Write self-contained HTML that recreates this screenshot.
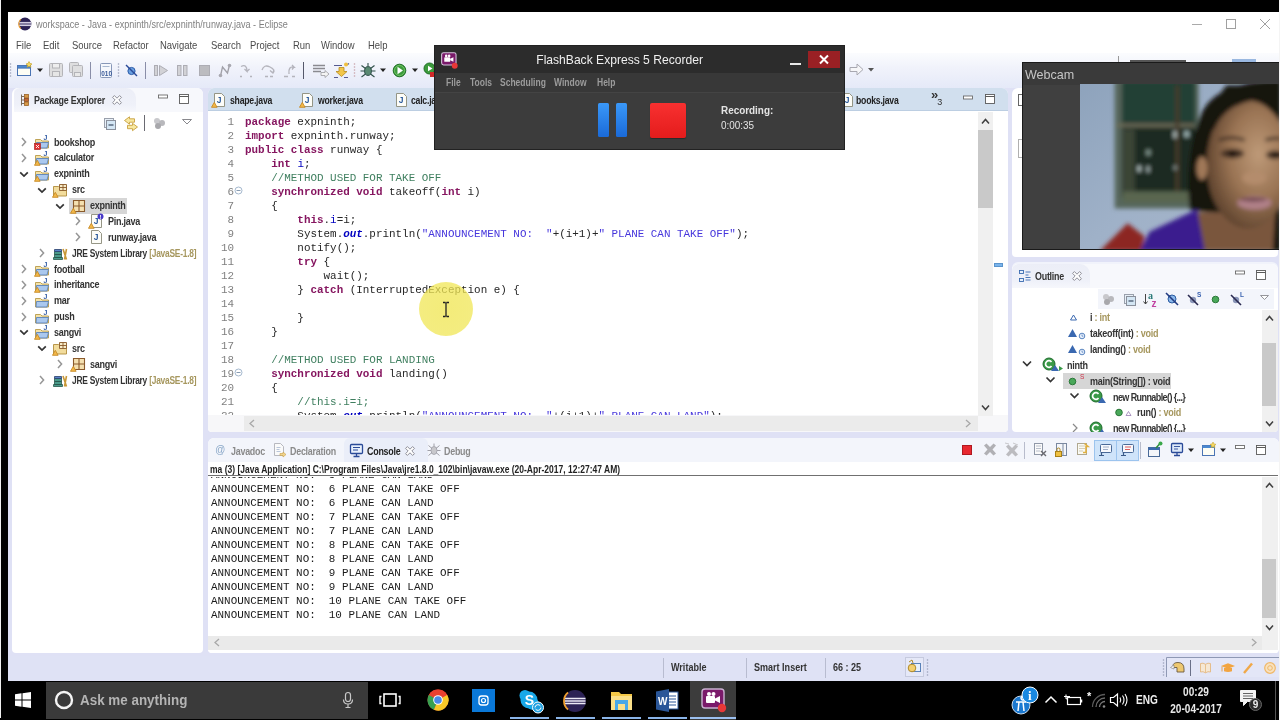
<!DOCTYPE html>
<html>
<head>
<meta charset="utf-8">
<title>Eclipse</title>
<style>
*{box-sizing:border-box;margin:0;padding:0}
html,body{width:1280px;height:720px;overflow:hidden;background:#000;font-family:"Liberation Sans",sans-serif;font-size:11px;color:#222}
.abs{position:absolute}
.sx{display:inline-block;transform:scaleX(.86);transform-origin:0 50%;white-space:nowrap}
#win{position:absolute;left:8px;top:12px;width:1271px;height:669px;background:#dfe1f5;overflow:hidden}
#title{position:absolute;left:0;top:0;width:1271px;height:23px;background:#fff}
#title .t{position:absolute;left:27.500px;top:5.500px;font-size:10.800px;color:#808080;transform:scaleX(.84);transform-origin:0 50%;white-space:nowrap}
#menubar{position:absolute;left:0;top:23px;width:1271px;height:18px;background:#fff}
#menubar span{position:absolute;top:4px;font-size:11px;color:#4a4a4a;transform:scaleX(.86);transform-origin:0 50%;white-space:nowrap}
#toolbar{position:absolute;left:0;top:41px;width:1271px;height:35px;background:linear-gradient(#fbfcfe,#f1f3fb 40%,#e5e9f8)}
.panel{position:absolute;background:#fff;border-radius:6px 6px 4px 4px;overflow:hidden}
.tabhdr{position:absolute;left:0;top:0;right:0;height:24px;background:#f3f5fc}
.tabtxt{position:absolute;font-size:11px;font-weight:bold;color:#333;letter-spacing:-0.3px;white-space:nowrap}
.tabtxt .sx{transform:scaleX(.81)}
.tree{position:absolute;font-size:10.5px;font-weight:bold;color:#333;letter-spacing:-0.3px;white-space:nowrap}
.mono{font-family:"Liberation Mono",monospace;font-size:10.92px;line-height:14px;white-space:pre}
.kw{color:#861660;font-weight:bold}
.cm{color:#3f7f5f}
.st{color:#4636dc}
.fld{color:#0000c0}
.fbm{top:30px;font-size:10.500px;font-weight:bold;color:#9c9c9c;white-space:nowrap;transform:scaleX(.81);transform-origin:0 50%}
#taskbar{position:absolute;left:8px;top:681px;width:1271px;height:39px;background:#000}
</style>
</head>
<body>
<div id="all" style="position:absolute;left:0;top:0;width:1280px;height:720px;filter:blur(.45px)">

<svg width="0" height="0" style="position:absolute">
<defs>
 <g id="i-proj"><path d="M1.500 5.500h5l1.500 1.500h6.500v7h-13z" fill="#f4e2a8" stroke="#b89a48" stroke-width=".9"/><path d="M2.500 8.500h12l-1.500 5.500h-11z" fill="#aac8ee" stroke="#5a82b8" stroke-width=".9"/><text x="9.500" y="6" font-size="7" font-weight="bold" font-family="Liberation Sans" fill="#3a62a8">J</text></g>
 <g id="i-warn"><path d="M3.300 10.300l2.800 5h-5.600z" fill="#f2b848" stroke="#c88c28" stroke-width=".9" stroke-linejoin="round"/></g>
 <g id="i-err"><rect x="0.500" y="9.500" width="6" height="6" fill="#e03030" stroke="#a01818" stroke-width=".6"/><path d="M2 11l3 3M5 11l-3 3" stroke="#fff" stroke-width=".9"/></g>
 <g id="i-src"><path d="M1.500 4.500h5l1.500 1.500h6.500v8h-13z" fill="#f2dc9c" stroke="#b08c3c" stroke-width=".9"/><path d="M7.500 2.500h7v6h-7zM7.500 5.500h7M11 2.500v6" fill="#f8ecc8" stroke="#8a5a28" stroke-width=".9"/></g>
 <g id="i-pkg"><path d="M3.500 2.500h11v11h-11zM3.500 8h11M9 2.500v11" fill="#f4e0b0" stroke="#8a5a2c" stroke-width="1.100"/></g>
 <g id="i-jfile"><path d="M3.500 1.500h7l3 3v10h-10z" fill="#fdfdf8" stroke="#8a8a78" stroke-width=".9"/><text x="5.800" y="11.200" font-size="8.500" font-weight="bold" font-family="Liberation Sans" fill="#2a5a9c">J</text></g>
 <g id="i-jre"><path d="M1.500 12.500h9v2h-9zM2.500 9.500h7v3h-7zM2.500 6.500h7v3h-7z" fill="#4a9a8a" stroke="#28584c" stroke-width=".8"/><path d="M2.500 4.500h7v2h-7z" fill="#5a82c8" stroke="#28406c" stroke-width=".8"/><path d="M11 4l3.500 10.500M14.500 4l-2 10.500" stroke="#c89838" stroke-width="1.600"/></g>
 <g id="i-pkgexp"><path d="M2.500 2.500v11M2.500 4.500h3M2.500 8h3M2.500 11.500h3" stroke="#7a6a58" stroke-width="1" fill="none"/><rect x="5.500" y="2.500" width="4" height="3.500" fill="#d89848" stroke="#9a6428" stroke-width=".8"/><rect x="5.500" y="6.500" width="4" height="3" fill="#c06830" stroke="#8a4820" stroke-width=".8"/><rect x="5.500" y="10" width="4" height="3.500" fill="#d89848" stroke="#9a6428" stroke-width=".8"/></g>
 <g id="a-r"><path d="M2 1l3.600 4-3.600 4" fill="none" stroke="#969696" stroke-width="1.500"/></g>
 <g id="a-d"><path d="M1.200 2.300l3.800 3.800 3.800-3.800" fill="none" stroke="#353535" stroke-width="1.700"/></g>
 <g id="i-min"><rect x="0.500" y="0.500" width="9" height="3" fill="#fff" stroke="#6a6a6a" stroke-width=".9"/></g>
 <g id="i-max"><rect x="0.500" y="0.500" width="9" height="9" fill="#fff" stroke="#5a5a5a" stroke-width=".9"/><path d="M0.500 2.500h9" stroke="#5a5a5a" stroke-width="1"/></g>
 <g id="i-x"><path d="M1.300 2.800L2.800 1.300 5 3.500 7.200 1.300 8.700 2.800 6.500 5 8.700 7.200 7.200 8.700 5 6.500 2.800 8.700 1.300 7.200 3.500 5z" fill="#fff" stroke="#85858e" stroke-width=".75"/></g>
</defs></svg>
<div id="win">
  <div id="title"><svg class="abs" style="left:9.500px;top:5px" width="14" height="14" viewBox="0 0 16 16"><circle cx="8" cy="8" r="7.3" fill="#2c2255"/><path d="M1 6.2h14M1 8h14M1 9.8h14" stroke="#e8e4f4" stroke-width="1.1"/><path d="M3.2 2.6A7.3 7.3 0 0 0 3.2 13.4" stroke="#f0a030" stroke-width="1.2" fill="none"/></svg><div class="t">workspace - Java - expninth/src/expninth/runway.java - Eclipse</div><svg class="abs" style="left:1180px;top:4px" width="84" height="16" viewBox="0 0 84 16"><path d="M4 8.5h10" stroke="#aaa" stroke-width="1"/><rect x="38.5" y="3.5" width="9" height="9" fill="none" stroke="#a0a0a0" stroke-width="1"/><path d="M72 3l10 10M82 3l-10 10" stroke="#a0a0a0" stroke-width="1"/></svg></div>
  <div id="menubar">
    <span style="left:8px">File</span><span style="left:35px">Edit</span><span style="left:64px">Source</span><span style="left:105px">Refactor</span><span style="left:152px">Navigate</span><span style="left:203px">Search</span><span style="left:242px">Project</span><span style="left:285px">Run</span><span style="left:313px">Window</span><span style="left:360px">Help</span>
  </div>
  <div id="toolbar">
<svg class="abs" style="left:0;top:3.500px" width="440" height="32" viewBox="8 56 440 32">
 <g fill="#9aa0b8"><circle cx="10.5" cy="63" r=".8"/><circle cx="10.5" cy="66" r=".8"/><circle cx="10.5" cy="69" r=".8"/><circle cx="10.5" cy="72" r=".8"/><circle cx="10.5" cy="75" r=".8"/></g>
 <!-- new -->
 <rect x="17.5" y="64.5" width="13" height="10" fill="#fdfdf4" stroke="#4a74b4"/><rect x="17.5" y="64.5" width="13" height="2.6" fill="#4a88d0" stroke="#4a74b4"/><path d="M29 60.5l1 2 2 .4-1.5 1.4.4 2-1.9-1-1.9 1 .4-2L26 62.900l2-.4z" fill="#f6d860" stroke="#c09a20" stroke-width=".6"/>
 <path d="M37 67.500h6l-3 3.500z" fill="#222"/>
 <!-- save -->
 <g fill="#dededf" stroke="#b4b4b8"><rect x="49.500" y="62.500" width="13" height="13" rx="1"/><rect x="52.500" y="62.500" width="7" height="4.500" fill="#eee"/><rect x="52.500" y="70.500" width="7" height="5" fill="#e6e6e6"/></g>
 <g fill="#dededf" stroke="#b4b4b8"><rect x="69.500" y="61.500" width="9" height="10" rx="1"/><rect x="72.500" y="64.500" width="10" height="11" rx="1"/><rect x="74.500" y="71.500" width="6" height="4" fill="#e8e8e8"/></g>
 <path d="M90.500 61v17" stroke="#8a8ea8"/>
 <!-- 010 -->
 <rect x="100.500" y="62.500" width="11" height="14" rx="1" fill="#f6f8fc" stroke="#8898b8"/><text x="101.200" y="74.800" font-size="6.500" font-family="Liberation Sans" font-weight="bold" fill="#3a5a9a">010</text><path d="M102.500 65.500h7" stroke="#a8b8d0"/>
 <g fill="#9aa0b8"><circle cx="118.500" cy="63" r=".8"/><circle cx="118.500" cy="66" r=".8"/><circle cx="118.500" cy="69" r=".8"/><circle cx="118.500" cy="72" r=".8"/><circle cx="118.500" cy="75" r=".8"/></g>
 <!-- skip breakpoints -->
 <circle cx="131.500" cy="70" r="3.600" fill="#6aa0e0" stroke="#2a5aa8"/><path d="M126 64l11 11" stroke="#2a4a98" stroke-width="1.400"/>
 <path d="M145.500 61v17" stroke="#8a8ea8"/>
 <!-- resume/suspend/stop gray -->
 <g fill="#d2d2d6" stroke="#adadb4"><rect x="154.500" y="64.500" width="3" height="10"/><path d="M159.500 64.500l8 5-8 5z"/><rect x="177.500" y="64.500" width="3.500" height="10"/><rect x="183.500" y="64.500" width="3.500" height="10"/><rect x="199.500" y="64.500" width="10" height="10" fill="#bcbcc0"/></g>
 <!-- disconnect -->
 <path d="M220.500 75l2-9 5 6 2-8" stroke="#a0a0a8" stroke-width="1.300" fill="none"/><circle cx="220.500" cy="74.500" r="1.800" fill="#a8a8b0"/><circle cx="229.500" cy="64.500" r="1.800" fill="#a8a8b0"/>
 <!-- step into/over/return -->
 <g stroke="#b4b4bc" fill="none" stroke-width="1.300"><path d="M241 65.500q6-3 6 5l-2.500-2.500M247 70.500l2.500-2.500"/><path d="M240 75.500h3M250 75.500h3" stroke-dasharray="2 1"/>
 <path d="M262 69q2-6 8-3t3 6l-3-2.500M273 72l1-3.500"/><path d="M265 75.500h3M270 75.500h3"/>
 <path d="M284 75.500h4M292 75.500h3"/><path d="M289 73q-1-8 5-7l-2-2M294 66l-2 2.500"/></g>
 <path d="M303.500 61v17" stroke="#55586a"/>
 <!-- drop to frame -->
 <path d="M313 64.500h12M313 67.500h12M313 70.500h8" stroke="#8a8a90" stroke-width="1.300"/><path d="M321 71.500h4v-2l4 3.500-4 3.500v-2h-4z" fill="#f4f4f4" stroke="#9a9aa0" stroke-width=".8"/>
 <!-- step filters -->
 <path d="M334 64.500h8M346 64.500l3-2M334 76.500h4M344 76.500h4" stroke="#555a90" stroke-width="1.200"/><path d="M339 66.500h5v4h3l-5.500 5-5.500-5h3z" fill="#f2c64a" stroke="#b88c1c" stroke-width=".8"/><circle cx="346" cy="63.500" r="2" fill="#f0c040"/>
 <g fill="#c8a0a8"><circle cx="354.500" cy="63" r=".8"/><circle cx="354.500" cy="66" r=".8"/><circle cx="354.500" cy="69" r=".8"/><circle cx="354.500" cy="72" r=".8"/><circle cx="354.500" cy="75" r=".8"/></g>
 <!-- debug -->
 <ellipse cx="368" cy="70" rx="3.400" ry="4.400" fill="#5a8a72" stroke="#2f4f48"/><path d="M361.500 64.500l4 3M374.500 64.500l-4 3M360.500 70h4M375.500 70h-4M361.500 76l4-3M374.500 76l-4-3M368 62v3" stroke="#2f4f48" stroke-width="1.100"/>
 <path d="M380 67.500h6l-3 3.500z" fill="#222"/>
 <!-- run -->
 <circle cx="399.500" cy="69.500" r="6.300" fill="#3c9a3c" stroke="#1e6e24"/><circle cx="399.500" cy="69.500" r="5" fill="none" stroke="#7ccc6c" stroke-width=".8"/><path d="M397.500 65.800l5.500 3.700-5.500 3.700z" fill="#fff"/>
 <path d="M412 67.500h6l-3 3.500z" fill="#222"/>
 <circle cx="429.500" cy="67.500" r="5.500" fill="#3c9a3c" stroke="#1e6e24"/><path d="M428 64.800l4.500 2.700-4.500 2.700z" fill="#fff"/><rect x="430" y="71" width="5" height="5" fill="#d02828"/>
</svg>
<svg class="abs" style="left:838px;top:6px" width="40" height="20" viewBox="0 0 40 20"><path d="M4 8.500h7v-3.500l6 5.500-6 5.500v-3.500h-7z" fill="#f6f6f8" stroke="#a8a8b0"/><path d="M22 9h6l-3 3.500z" fill="#555"/></svg>
</div>

  <!-- Package Explorer -->
  <div class="panel" id="pkg" style="left:4px;top:76px;width:191px;height:565px;padding:0"><div class="abs" style="left:2px;top:0;width:189px;height:565px">
<div class="tabhdr" style="background:#f7f8fc"></div><div class="abs" style="left:0;top:0;width:122px;height:24px;border-radius:6px 10px 0 0;background:linear-gradient(#eceef7,#eff1f9 70%,#f6f7fc)"></div>
<svg class="abs" style="left:5px;top:4px" width="16" height="16" viewBox="0 0 16 16"><use href="#i-pkgexp"/></svg>
<div class="tabtxt" style="left:20px;top:6px"><span class="sx">Package Explorer</span></div>
<svg class="abs" style="left:97px;top:6px" width="12" height="12" viewBox="0 0 10 10"><use href="#i-x"/></svg>
<svg class="abs" style="left:144px;top:6px" width="10" height="5" viewBox="0 0 10 4"><use href="#i-min"/></svg>
<svg class="abs" style="left:165px;top:6px" width="10" height="10" viewBox="0 0 10 10"><use href="#i-max"/></svg>
<svg class="abs" style="left:86px;top:26px" width="100" height="18" viewBox="100 114 100 18">
<rect x="104.500" y="118.500" width="9" height="9" fill="#e8f0f8" stroke="#9aa0ac"/><rect x="106.500" y="120.500" width="9" height="9" fill="#d4e6f4" stroke="#8a909c"/><path d="M108.500 125h5" stroke="#5a6a80" stroke-width="1.400"/>
<path d="M134.500 118.800h-5v-2l-5 3.700 5 3.700v-2h5z" fill="#f8e8a0" stroke="#c8a040" stroke-width=".9" stroke-linejoin="round"/><path d="M127.500 125.300h5v-2l5 3.700-5 3.700v-2h-5z" fill="#f8e8a0" stroke="#c8a040" stroke-width=".9" stroke-linejoin="round"/>
<path d="M144.500 115v16" stroke="#6a6a72"/>
<circle cx="157" cy="121" r="3" fill="#c8c8cc"/><circle cx="162" cy="123" r="3" fill="#b8b8bc"/><circle cx="158" cy="126" r="3" fill="#a8a8ac"/>
<path d="M182.500 119.500h9l-4.500 4.500z" fill="#fff" stroke="#7a7a80" stroke-width=".9"/>
</svg>
<svg class="abs" style="left:6px;top:49.0px" width="8" height="10" viewBox="0 0 8 10"><use href="#a-r"/></svg>
<svg class="abs" style="left:20px;top:46.0px" width="16" height="16" viewBox="0 0 16 16"><use href="#i-proj"/><use href="#i-err"/></svg>
<div class="tree" style="left:40px;top:47.5px"><span class="sx">bookshop</span></div>
<svg class="abs" style="left:6px;top:64.9px" width="8" height="10" viewBox="0 0 8 10"><use href="#a-r"/></svg>
<svg class="abs" style="left:20px;top:61.9px" width="16" height="16" viewBox="0 0 16 16"><use href="#i-proj"/><use href="#i-warn"/></svg>
<div class="tree" style="left:40px;top:63.4px"><span class="sx">calculator</span></div>
<svg class="abs" style="left:5px;top:81.7px" width="10" height="9" viewBox="0 0 10 9"><use href="#a-d"/></svg>
<svg class="abs" style="left:20px;top:77.7px" width="16" height="16" viewBox="0 0 16 16"><use href="#i-proj"/><use href="#i-warn"/></svg>
<div class="tree" style="left:40px;top:79.2px"><span class="sx">expninth</span></div>
<svg class="abs" style="left:23px;top:97.6px" width="10" height="9" viewBox="0 0 10 9"><use href="#a-d"/></svg>
<svg class="abs" style="left:38px;top:93.6px" width="16" height="16" viewBox="0 0 16 16"><use href="#i-src"/><use href="#i-warn"/></svg>
<div class="tree" style="left:58px;top:95.1px"><span class="sx">src</span></div>
<div class="abs" style="left:55px;top:109.5px;width:58px;height:16px;background:#d6d6d6"></div>
<svg class="abs" style="left:41px;top:113.5px" width="10" height="9" viewBox="0 0 10 9"><use href="#a-d"/></svg>
<svg class="abs" style="left:56px;top:109.5px" width="16" height="16" viewBox="0 0 16 16"><use href="#i-pkg"/><use href="#i-warn"/></svg>
<div class="tree" style="left:76px;top:111.0px"><span class="sx">expninth</span></div>
<svg class="abs" style="left:60px;top:128.3px" width="8" height="10" viewBox="0 0 8 10"><use href="#a-r"/></svg>
<svg class="abs" style="left:74px;top:125.3px" width="16" height="16" viewBox="0 0 16 16"><use href="#i-jfile"/><use href="#i-warn"/><circle cx="12.500" cy="3.500" r="3" fill="#4838c8"/><text x="11.600" y="5.800" font-size="6" font-weight="bold" fill="#fff" font-family="Liberation Sans">!</text></svg>
<div class="tree" style="left:94px;top:126.8px"><span class="sx">Pin.java</span></div>
<svg class="abs" style="left:60px;top:144.2px" width="8" height="10" viewBox="0 0 8 10"><use href="#a-r"/></svg>
<svg class="abs" style="left:74px;top:141.2px" width="16" height="16" viewBox="0 0 16 16"><use href="#i-jfile"/></svg>
<div class="tree" style="left:94px;top:142.7px"><span class="sx">runway.java</span></div>
<svg class="abs" style="left:24px;top:160.1px" width="8" height="10" viewBox="0 0 8 10"><use href="#a-r"/></svg>
<svg class="abs" style="left:38px;top:157.1px" width="16" height="16" viewBox="0 0 16 16"><use href="#i-jre"/></svg>
<div class="tree" style="left:58px;top:158.6px"><span class="sx" style="transform:scaleX(.8)">JRE System Library<span style="color:#a6975e"> [JavaSE-1.8]</span></span></div>
<svg class="abs" style="left:6px;top:176.0px" width="8" height="10" viewBox="0 0 8 10"><use href="#a-r"/></svg>
<svg class="abs" style="left:20px;top:173.0px" width="16" height="16" viewBox="0 0 16 16"><use href="#i-proj"/><use href="#i-warn"/></svg>
<div class="tree" style="left:40px;top:174.5px"><span class="sx">football</span></div>
<svg class="abs" style="left:6px;top:191.8px" width="8" height="10" viewBox="0 0 8 10"><use href="#a-r"/></svg>
<svg class="abs" style="left:20px;top:188.8px" width="16" height="16" viewBox="0 0 16 16"><use href="#i-proj"/><use href="#i-warn"/></svg>
<div class="tree" style="left:40px;top:190.3px"><span class="sx">inheritance</span></div>
<svg class="abs" style="left:6px;top:207.7px" width="8" height="10" viewBox="0 0 8 10"><use href="#a-r"/></svg>
<svg class="abs" style="left:20px;top:204.7px" width="16" height="16" viewBox="0 0 16 16"><use href="#i-proj"/></svg>
<div class="tree" style="left:40px;top:206.2px"><span class="sx">mar</span></div>
<svg class="abs" style="left:6px;top:223.6px" width="8" height="10" viewBox="0 0 8 10"><use href="#a-r"/></svg>
<svg class="abs" style="left:20px;top:220.6px" width="16" height="16" viewBox="0 0 16 16"><use href="#i-proj"/></svg>
<div class="tree" style="left:40px;top:222.1px"><span class="sx">push</span></div>
<svg class="abs" style="left:5px;top:240.4px" width="10" height="9" viewBox="0 0 10 9"><use href="#a-d"/></svg>
<svg class="abs" style="left:20px;top:236.4px" width="16" height="16" viewBox="0 0 16 16"><use href="#i-proj"/><use href="#i-warn"/></svg>
<div class="tree" style="left:40px;top:237.9px"><span class="sx">sangvi</span></div>
<svg class="abs" style="left:23px;top:256.3px" width="10" height="9" viewBox="0 0 10 9"><use href="#a-d"/></svg>
<svg class="abs" style="left:38px;top:252.3px" width="16" height="16" viewBox="0 0 16 16"><use href="#i-src"/><use href="#i-warn"/></svg>
<div class="tree" style="left:58px;top:253.8px"><span class="sx">src</span></div>
<svg class="abs" style="left:42px;top:271.2px" width="8" height="10" viewBox="0 0 8 10"><use href="#a-r"/></svg>
<svg class="abs" style="left:56px;top:268.2px" width="16" height="16" viewBox="0 0 16 16"><use href="#i-pkg"/><use href="#i-warn"/></svg>
<div class="tree" style="left:76px;top:269.7px"><span class="sx">sangvi</span></div>
<svg class="abs" style="left:24px;top:287.0px" width="8" height="10" viewBox="0 0 8 10"><use href="#a-r"/></svg>
<svg class="abs" style="left:38px;top:284.0px" width="16" height="16" viewBox="0 0 16 16"><use href="#i-jre"/></svg>
<div class="tree" style="left:58px;top:285.5px"><span class="sx" style="transform:scaleX(.8)">JRE System Library<span style="color:#a6975e"> [JavaSE-1.8]</span></span></div>
  </div></div>
  <!-- Editor -->
  <div class="panel" id="editor" style="left:200px;top:76px;width:800px;height:344px">
<div class="tabhdr" style="background:#d1dfee;height:23px;border-bottom:1px solid #bccee2"></div>
<svg class="abs" style="left:3px;top:4px" width="16" height="16" viewBox="0 0 16 16"><use href="#i-jfile"/><use href="#i-warn"/></svg>
<div class="tabtxt" style="left:22px;top:6px;color:#222"><span class="sx" style="transform:scaleX(.79)">shape.java</span></div>
<svg class="abs" style="left:91px;top:4px" width="16" height="16" viewBox="0 0 16 16"><use href="#i-jfile"/><use href="#i-warn"/></svg>
<div class="tabtxt" style="left:110px;top:6px;color:#222"><span class="sx" style="transform:scaleX(.79)">worker.java</span></div>
<svg class="abs" style="left:185px;top:4px" width="16" height="16" viewBox="0 0 16 16"><use href="#i-jfile"/></svg>
<div class="tabtxt" style="left:203px;top:6px;color:#222"><span class="sx" style="transform:scaleX(.79)">calc.java</span></div>
<svg class="abs" style="left:631px;top:4px" width="16" height="16" viewBox="0 0 16 16"><use href="#i-jfile"/></svg>
<div class="tabtxt" style="left:648px;top:6px;color:#222"><span class="sx" style="transform:scaleX(.79)">books.java</span></div>
<div class="abs" style="left:723px;top:0px;font-size:13px;line-height:13px;font-weight:bold;color:#333">»<span style="font-size:9px;position:relative;top:6px;left:-1px;font-weight:normal">3</span></div>
<svg class="abs" style="left:755px;top:7px" width="10" height="5" viewBox="0 0 10 4"><use href="#i-min"/></svg>
<svg class="abs" style="left:777px;top:6px" width="10" height="10" viewBox="0 0 10 10"><use href="#i-max"/></svg>
<div class="abs mono" style="left:0;top:26.500px;width:26px;text-align:right;color:#808080">1
2
3
4
5
6
7
8
9
10
11
12
13
14
15
16
17
18
19
20
21
22</div>
<div class="abs mono" style="left:37px;top:26.500px;color:#262626"><span class="kw">package</span> expninth;
<span class="kw">import</span> expninth.runway;
<span class="kw">public</span> <span class="kw">class</span> runway {
    <span class="kw">int</span> <span class="fld">i</span>;
    <span class="cm">//METHOD USED FOR TAKE OFF</span>
    <span class="kw">synchronized</span> <span class="kw">void</span> takeoff(<span class="kw">int</span> i)
    {
        <span class="kw">this</span>.<span class="fld">i</span>=i;
        System.<span class="fld" style="font-style:italic;font-weight:bold">out</span>.println(<span class="st">"ANNOUNCEMENT NO:  "</span>+(i+1)+<span class="st">" PLANE CAN TAKE OFF"</span>);
        notify();
        <span class="kw">try</span> {
            wait();
        } <span class="kw">catch</span> (InterruptedException e) {

        }
    }

    <span class="cm">//METHOD USED FOR LANDING</span>
    <span class="kw">synchronized</span> <span class="kw">void</span> landing()
    {
        <span class="cm">//this.i=i;</span>
        System.<span class="fld" style="font-style:italic;font-weight:bold">out</span>.println(<span class="st">"ANNOUNCEMENT NO:  "</span>+(i+1)+<span class="st">" PLANE CAN LAND"</span>);</div>
<svg class="abs" style="left:26px;top:98px" width="9" height="9" viewBox="0 0 9 9"><circle cx="4.500" cy="4.500" r="3.500" fill="#fff" stroke="#9ab0c8" stroke-width=".9"/><path d="M2.500 4.500h4" stroke="#7a90a8" stroke-width=".9"/></svg>
<svg class="abs" style="left:26px;top:280px" width="9" height="9" viewBox="0 0 9 9"><circle cx="4.500" cy="4.500" r="3.500" fill="#fff" stroke="#9ab0c8" stroke-width=".9"/><path d="M2.500 4.500h4" stroke="#7a90a8" stroke-width=".9"/></svg>
<div class="abs" style="left:212px;top:195px;width:54px;height:54px;margin:-1px;border-radius:50%;background:radial-gradient(circle,rgba(240,230,84,.78) 0,rgba(240,230,84,.74) 72%,rgba(242,234,110,.5) 88%,rgba(244,238,140,0) 100%)"></div>
<svg class="abs" style="left:233px;top:213px" width="10" height="17" viewBox="0 0 10 17"><path d="M2 1.500h2.500M5.500 1.500H8M2 15.500h2.500M5.500 15.500H8M5 1.500v14" stroke="#222" stroke-width="1.300" fill="none"/></svg>
<div class="abs" style="left:0;top:327px;width:800px;height:17px;background:#f7f7f9"></div>
<div class="abs" style="left:36px;top:328px;width:734px;height:15px;background:#ebebeb"></div>
<svg class="abs" style="left:40px;top:331px" width="8" height="9" viewBox="0 0 8 9"><path d="M6 1l-4 3.500 4 3.500" fill="none" stroke="#a8a8a8" stroke-width="1.300"/></svg>
<svg class="abs" style="left:756px;top:331px" width="8" height="9" viewBox="0 0 8 9"><path d="M2 1l4 3.500-4 3.500" fill="none" stroke="#a8a8a8" stroke-width="1.300"/></svg>
<div class="abs" style="left:770px;top:24px;width:15px;height:304px;background:#f0f0f0"></div>
<div class="abs" style="left:770px;top:42px;width:15px;height:78px;background:#c9c9c9"></div>
<svg class="abs" style="left:773px;top:30px" width="9" height="7" viewBox="0 0 9 7"><path d="M1 5.500l3.500-4 3.500 4" fill="none" stroke="#404040" stroke-width="1.500"/></svg>
<svg class="abs" style="left:773px;top:316px" width="9" height="7" viewBox="0 0 9 7"><path d="M1 1.500l3.500 4 3.500-4" fill="none" stroke="#404040" stroke-width="1.500"/></svg>
<div class="abs" style="left:786px;top:175px;width:9px;height:4px;background:#7ab4ec;border:1px solid #5a94cc"></div>
  </div>
  <!-- Right top -->
  <div class="panel" id="rtop" style="left:1004px;top:76px;width:266px;height:169px"><div class="abs" style="left:6px;top:51px;width:8px;height:19px;border:1px solid #b0b0b0;background:#fff"></div><div class="abs" style="left:6px;top:6px;width:5px;height:12px;border:1px solid #666"></div></div>
  <!-- Outline -->
  <div class="panel" id="outline" style="left:1004px;top:252px;width:266px;height:168px;box-shadow:0 -2px 0 #f1f3fb">
<div class="tabhdr" style="background:#f7f8fc"></div><div class="abs" style="left:0;top:0;width:78px;height:24px;border-radius:6px 10px 0 0;background:linear-gradient(#eceef7,#eff1f9 70%,#f6f7fc)"></div>
<svg class="abs" style="left:6px;top:4px" width="14" height="16" viewBox="0 0 14 16"><rect x="1.500" y="2.500" width="4" height="3" fill="#e8f0fc" stroke="#3a6ab0" stroke-width=".9"/><rect x="1.500" y="10.500" width="4" height="3" fill="#e8f0fc" stroke="#3a6ab0" stroke-width=".9"/><path d="M7.500 4h5M7.500 7h3M7.500 9.500h5M7.500 12h5" stroke="#3a6ab0" stroke-width=".9"/></svg>
<div class="tabtxt" style="left:23px;top:6px"><span class="sx">Outline</span></div>
<svg class="abs" style="left:59px;top:6px" width="12" height="12" viewBox="0 0 10 10"><use href="#i-x"/></svg>
<svg class="abs" style="left:223px;top:6px" width="10" height="5" viewBox="0 0 10 4"><use href="#i-min"/></svg>
<svg class="abs" style="left:244px;top:6px" width="10" height="10" viewBox="0 0 10 10"><use href="#i-max"/></svg>
<svg class="abs" style="left:86px;top:25px" width="176" height="20" viewBox="1098 289 176 20">
<rect x="1098" y="289" width="176" height="20" fill="#f3f5fb"/>
<circle cx="1106" cy="297" r="3" fill="#c8c8cc"/><circle cx="1111" cy="299" r="3" fill="#b8b8bc"/><circle cx="1107" cy="302" r="3" fill="#a8a8ac"/>
<rect x="1124.500" y="294.500" width="9" height="9" fill="#e8f0f8" stroke="#9aa0ac"/><rect x="1126.500" y="296.500" width="9" height="9" fill="#d4e6f4" stroke="#8a909c"/><path d="M1128.500 301h5" stroke="#5a6a80" stroke-width="1.400"/>
<path d="M1145.500 294v10l-2-2.500M1145.500 304l2-2.500" stroke="#444" fill="none"/><text x="1148" y="299" font-size="10" font-weight="bold" font-family="Liberation Serif" fill="#2a7a78">a</text><text x="1151.500" y="306.500" font-size="10" font-weight="bold" font-family="Liberation Sans" fill="#c040a0">z</text>
<circle cx="1172" cy="299" r="4" fill="#8ab8ec" stroke="#2a5aa0"/><path d="M1166 293l12 12" stroke="#223a80" stroke-width="1.600"/>
<circle cx="1193" cy="300" r="3.200" fill="#8a96b8"/><path d="M1188 295l10 10" stroke="#2a2a50" stroke-width="1.600"/><text x="1197" y="297" font-size="6.500" font-weight="bold" font-family="Liberation Sans" fill="#3a62b0">S</text>
<circle cx="1215.500" cy="299.500" r="3.300" fill="#4aa85a" stroke="#2a7838"/>
<circle cx="1236" cy="300" r="3.200" fill="#8a96b8"/><path d="M1231 295l10 10" stroke="#2a2a50" stroke-width="1.600"/><text x="1240" y="297" font-size="6.500" font-weight="bold" font-family="Liberation Sans" fill="#3a62b0">L</text>
<path d="M1260.500 295.500h8l-4 4z" fill="#fff" stroke="#8a8a90" stroke-width=".9"/>
</svg>
<div class="abs" style="left:51px;top:109px;width:108px;height:16px;background:#d6d6d6"></div>
<svg class="abs" style="left:0;top:46px" width="250" height="122" viewBox="1012 310 250 122"><path d="M1070.500 320l3 -5 3 5z" fill="#fff" stroke="#3a68b0" stroke-width="1"/><path d="M1068 337l4.500 -8 4.500 8z" fill="#3a68b0"/><circle cx="1082" cy="336" r="2.800" fill="#e8f0fc" stroke="#4a78b8" stroke-width=".9"/><path d="M1082 334.5v1.700h1.300" stroke="#4a78b8" stroke-width=".7" fill="none"/><path d="M1068 353l4.500 -8 4.500 8z" fill="#3a68b0"/><circle cx="1082" cy="352" r="2.800" fill="#e8f0fc" stroke="#4a78b8" stroke-width=".9"/><path d="M1082 350.5v1.700h1.300" stroke="#4a78b8" stroke-width=".7" fill="none"/><circle cx="1049" cy="364" r="6" fill="#3a9a48" stroke="#1e6a2c"/><path d="M1051.5 362a3.300 3.300 0 1 0 0 4" fill="none" stroke="#fff" stroke-width="1.700"/><path d="M1051 371l4 -6 4 6z" fill="#3a68b0"/><path d="M1059 366l4 2.500 -4 2.500z" fill="#3a9a48"/><path d="M1023 361.500l4 4 4 -4" fill="none" stroke="#353535" stroke-width="1.700"/><path d="M1046.500 377.500l4 4 4 -4" fill="none" stroke="#353535" stroke-width="1.700"/><circle cx="1072.500" cy="381.500" r="3.300" fill="#4aa85a" stroke="#2a7838"/><text x="1080" y="379" font-size="6.500" font-family="Liberation Sans" fill="#d03048">S</text><path d="M1070.500 393.500l4 4 4 -4" fill="none" stroke="#353535" stroke-width="1.700"/><circle cx="1096" cy="396" r="6" fill="#3a9a48" stroke="#1e6a2c"/><path d="M1098.5 394a3.300 3.300 0 1 0 0 4" fill="none" stroke="#fff" stroke-width="1.700"/><path d="M1098 403l4 -6 4 6z" fill="#3a68b0"/><circle cx="1119" cy="412.500" r="3.300" fill="#4aa85a" stroke="#2a7838"/><path d="M1126 415.500l2.500 -4 2.500 4z" fill="#fff" stroke="#8a6aa8" stroke-width=".7"/><path d="M1073 424l4 4 -4 4" fill="none" stroke="#8a8a8a" stroke-width="1.200"/><circle cx="1096" cy="428" r="6" fill="#3a9a48" stroke="#1e6a2c"/><path d="M1098.5 426a3.300 3.300 0 1 0 0 4" fill="none" stroke="#fff" stroke-width="1.700"/><path d="M1098 435l4 -6 4 6z" fill="#3a68b0"/></svg>
<div class="tree" style="left:78px;top:46.5px"><span class="sx">i<span style="color:#a6975e"> : int</span></span></div>
<div class="tree" style="left:78px;top:62.5px"><span class="sx">takeoff(int)<span style="color:#a6975e"> : void</span></span></div>
<div class="tree" style="left:78px;top:78.5px"><span class="sx">landing()<span style="color:#a6975e"> : void</span></span></div>
<div class="tree" style="left:55px;top:94.5px"><span class="sx">ninth</span></div>
<div class="tree" style="left:78px;top:110.5px"><span class="sx">main(String[])<span style="color:#333"> : void</span></span></div>
<div class="tree" style="left:101px;top:126.5px"><span class="sx"><span style="letter-spacing:-.7px">new Runnable() {...}</span></span></div>
<div class="tree" style="left:125px;top:142.0px"><span class="sx">run()<span style="color:#a6975e"> : void</span></span></div>
<div class="tree" style="left:101px;top:158.0px"><span class="sx"><span style="letter-spacing:-.7px">new Runnable() {...}</span></span></div>
<div class="abs" style="left:250px;top:46px;width:16px;height:122px;background:#f0f0f0"></div>
<div class="abs" style="left:250px;top:79px;width:14px;height:63px;background:#c9c9c9"></div>
<svg class="abs" style="left:253px;top:51px" width="9" height="7" viewBox="0 0 9 7"><path d="M1 5.500l3.500-4 3.500 4" fill="none" stroke="#404040" stroke-width="1.500"/></svg>
<svg class="abs" style="left:253px;top:156px" width="9" height="7" viewBox="0 0 9 7"><path d="M1 1.500l3.500 4 3.500-4" fill="none" stroke="#404040" stroke-width="1.500"/></svg>
  </div>
  <!-- Console -->
  <div class="panel" id="console" style="left:200px;top:426px;width:1071px;height:215px">
<div class="tabhdr" style="background:#f3f5fb;height:24px"></div>
<div class="abs" style="left:136px;top:0;width:84px;height:24px;background:#eaeef9;border-radius:6px 6px 0 0"></div>
<div class="abs" style="left:7px;top:6px;font-size:10px;color:#8aa8c8;font-style:italic">@</div>
<div class="tabtxt" style="left:23px;top:7px;color:#8a8a8a"><span class="sx">Javadoc</span></div>
<svg class="abs" style="left:64px;top:4px" width="16" height="16" viewBox="0 0 16 16"><path d="M2.500 1.500h6l3 3v9h-9z" fill="#fafafa" stroke="#b0b0b8" stroke-width=".9"/><path d="M4.500 5.500h4M4.500 7.500h3M4.500 9.500h4" stroke="#a8b8d0" stroke-width=".8"/><path d="M8 11.500h3v-1.500l3 2.500-3 2.500v-1.500h-3z" fill="#f2d48a" stroke="#c8a048" stroke-width=".6"/></svg>
<div class="tabtxt" style="left:82px;top:7px;color:#8a8a8a"><span class="sx">Declaration</span></div>
<svg class="abs" style="left:141px;top:5px" width="15" height="15" viewBox="0 0 15 15"><rect x="1.500" y="1.500" width="12" height="9" rx="1" fill="#e8f0fc" stroke="#2a4a98" stroke-width="1.300"/><path d="M4 4.500h7M4 7h5" stroke="#2a4a98" stroke-width="1"/><path d="M4.500 13.500h6M7.500 10.500v3" stroke="#2a4a98" stroke-width="1.300"/></svg>
<div class="tabtxt" style="left:159px;top:7px;color:#222"><span class="sx">Console</span></div>
<svg class="abs" style="left:196px;top:7px" width="12" height="12" viewBox="0 0 10 10"><use href="#i-x"/></svg>
<svg class="abs" style="left:218px;top:4px" width="16" height="16" viewBox="0 0 16 16"><ellipse cx="8" cy="8.500" rx="3" ry="4" fill="#c8c8cc" stroke="#a0a0a8" stroke-width=".8"/><path d="M2.500 3.500l3.500 3M13.500 3.500l-3.500 3M1.500 8.500h3.500M14.500 8.500h-3.500M2.500 13.500l3.500-3M13.500 13.500l-3.500-3M8 1.500v3" stroke="#a0a0a8" stroke-width="1"/></svg>
<div class="tabtxt" style="left:236px;top:7px;color:#8a8a8a"><span class="sx">Debug</span></div>
<svg class="abs" style="left:747px;top:2px" width="320" height="22" viewBox="955 440 320 22">
<rect x="962.500" y="445.500" width="9" height="9" fill="#e82830" stroke="#b01820"/>
<path d="M984 445.500l2.500-2 3.500 3.500 3.500-3.500 2.500 2-3.500 4 3.500 4-2.500 2-3.500-3.500-3.500 3.500-2.500-2 3.500-4z" fill="#b0b0b4"/>
<path d="M1006 446.500l2.500-2 3.500 3.500 3.500-3.500 2.500 2-3.500 4 3.500 4-2.500 2-3.500-3.500-3.500 3.500-2.500-2 3.500-4z" fill="#bcbcc0"/><path d="M1005 443l4 1M1013 443l5 2" stroke="#c8c8cc"/>
<path d="M1024.500 442v17" stroke="#b8bccc"/>
<rect x="1034.500" y="443.500" width="8" height="11" fill="#fafafa" stroke="#9098a8"/><path d="M1036 446h5M1036 448.500h5M1036 451h4" stroke="#a8b0c0" stroke-width=".8"/><path d="M1041 451l5 5M1046 451l-5 5" stroke="#6a6a70" stroke-width="1.400"/>
<rect x="1056.500" y="443.500" width="10" height="12" fill="#f4f6fa" stroke="#7a88a0"/><path d="M1063 444v11" stroke="#7a88a0"/><rect x="1055.500" y="451.500" width="6" height="5" fill="#f0c040" stroke="#a88018"/><path d="M1057 451.500v-2a1.500 1.500 0 0 1 3 0v2" stroke="#a88018" fill="none"/>
<rect x="1077.500" y="443.500" width="9" height="11" fill="#fafaf4" stroke="#b0a890"/><path d="M1079 446h6M1079 448.500h6M1079 451h4" stroke="#c8c0a8" stroke-width=".8"/><path d="M1083 452.500h3v-6l2 0-3.500-3" fill="none" stroke="#e0b040" stroke-width="1.600"/>
<rect x="1094.500" y="440.500" width="44" height="20" fill="#cfe4fa" stroke="#9cc4ee"/><path d="M1116.500 441v19" stroke="#9cc4ee"/>
<rect x="1100.500" y="444.500" width="11" height="8" rx="1" fill="#f6f8fc" stroke="#4a6a98"/><path d="M1103 447h6M1103 449.500h5" stroke="#8a9ab8" stroke-width=".8"/><path d="M1099 455.500h5M1101.500 452v3.500" stroke="#3a5a88" stroke-width="1.200"/>
<rect x="1122.500" y="444.500" width="11" height="8" rx="1" fill="#f6f8fc" stroke="#4a6a98"/><path d="M1125 447h6M1125 449.500h5" stroke="#d84848" stroke-width=".9"/><path d="M1121 455.500h5M1123.500 452v3.500" stroke="#3a5a88" stroke-width="1.200"/>
<path d="M1140.500 442v17" stroke="#b8bccc"/>
<rect x="1148.500" y="447.500" width="11" height="9" fill="#f4f6fa" stroke="#4a6a98"/><rect x="1148.500" y="447.500" width="11" height="2.500" fill="#3a6ab0"/><path d="M1156 448l4-4.500" stroke="#2a8a3a" stroke-width="1.500"/><circle cx="1160.500" cy="443.500" r="2" fill="#3aa84a"/>
<rect x="1171.500" y="443.500" width="11" height="9" rx="1" fill="#dce8f8" stroke="#2a4a98" stroke-width="1.300"/><path d="M1174 446.500h6M1174 449h4" stroke="#2a4a98" stroke-width=".9"/><path d="M1174 455.500h6M1177 452.500v3" stroke="#2a4a98" stroke-width="1.300"/>
<path d="M1188 448.500h6l-3 3.500z" fill="#222"/>
<rect x="1202.500" y="445.500" width="12" height="10" fill="#fdfdf4" stroke="#4a74b4"/><rect x="1202.500" y="445.500" width="12" height="2.500" fill="#4a88d0"/><path d="M1213 442l1 2 2 .3-1.500 1.400.4 2-1.900-1-1.900 1 .4-2-1.500-1.400 2-.3z" fill="#f6d860" stroke="#c09a20" stroke-width=".5"/>
<path d="M1220 448.500h6l-3 3.500z" fill="#222"/>
<rect x="1235.500" y="445.500" width="9" height="3" fill="#fff" stroke="#6a6a6a" stroke-width=".9"/>
<rect x="1256.500" y="445.500" width="9" height="9" fill="#fff" stroke="#5a5a5a" stroke-width=".9"/><path d="M1256.500 447.500h9" stroke="#5a5a5a"/>
</svg>
<div class="abs" style="left:0;top:24px;width:1070px;height:14px;background:#fff;border-bottom:1px solid #707070"></div>
<div class="abs" style="left:2px;top:26px;font-size:10px;font-weight:bold;color:#222;white-space:nowrap;transform:scaleX(.85);transform-origin:0 50%">ma (3) [Java Application] C:\Program Files\Java\jre1.8.0_102\bin\javaw.exe (20-Apr-2017, 12:27:47 AM)</div>
<div class="abs" style="left:0;top:39px;width:1050px;height:157px;overflow:hidden"><div class="abs mono" style="left:3px;top:-9.500px;color:#1a1a1a">ANNOUNCEMENT NO:  5 PLANE CAN LAND
ANNOUNCEMENT NO:  6 PLANE CAN TAKE OFF
ANNOUNCEMENT NO:  6 PLANE CAN LAND
ANNOUNCEMENT NO:  7 PLANE CAN TAKE OFF
ANNOUNCEMENT NO:  7 PLANE CAN LAND
ANNOUNCEMENT NO:  8 PLANE CAN TAKE OFF
ANNOUNCEMENT NO:  8 PLANE CAN LAND
ANNOUNCEMENT NO:  9 PLANE CAN TAKE OFF
ANNOUNCEMENT NO:  9 PLANE CAN LAND
ANNOUNCEMENT NO:  10 PLANE CAN TAKE OFF
ANNOUNCEMENT NO:  10 PLANE CAN LAND</div></div>
<div class="abs" style="left:1054px;top:39px;width:16px;height:157px;background:#f0f0f0"></div>
<div class="abs" style="left:1054px;top:121px;width:14px;height:59px;background:#c9c9c9"></div>
<svg class="abs" style="left:1057px;top:44px" width="9" height="7" viewBox="0 0 9 7"><path d="M1 5.500l3.500-4 3.500 4" fill="none" stroke="#404040" stroke-width="1.500"/></svg>
<svg class="abs" style="left:1057px;top:186px" width="9" height="7" viewBox="0 0 9 7"><path d="M1 1.500l3.500 4 3.500-4" fill="none" stroke="#404040" stroke-width="1.500"/></svg>
<div class="abs" style="left:0;top:197.500px;width:1054px;height:14.500px;background:#eaeaea"></div>
<div class="abs" style="left:1054px;top:196px;width:16px;height:16px;background:#f0f0f0"></div>
<svg class="abs" style="left:5px;top:200px" width="8" height="9" viewBox="0 0 8 9"><path d="M6 1l-4 3.500 4 3.500" fill="none" stroke="#a8a8a8" stroke-width="1.300"/></svg>
<svg class="abs" style="left:1042px;top:200px" width="8" height="9" viewBox="0 0 8 9"><path d="M2 1l4 3.500-4 3.500" fill="none" stroke="#a8a8a8" stroke-width="1.300"/></svg>
<div class="abs" style="left:0;top:212px;width:1070px;height:6px;background:#fff"></div>
  </div>
  <div id="status" class="abs" style="left:0;top:644px;width:1271px;height:25px;background:#dfe2f5"><div class="abs" style="left:655px;top:2px;width:1px;height:20px;background:#b8bcd0"></div><div class="abs" style="left:738px;top:2px;width:1px;height:20px;background:#b8bcd0"></div><div class="abs" style="left:817px;top:2px;width:1px;height:20px;background:#b8bcd0"></div><div class="abs" style="left:663px;top:5px;font-size:10.5px;font-weight:bold;color:#333"><span class="sx">Writable</span></div><div class="abs" style="left:746px;top:5px;font-size:10.5px;font-weight:bold;color:#333"><span class="sx">Smart Insert</span></div><div class="abs" style="left:825px;top:5px;font-size:10.5px;font-weight:bold;color:#333"><span class="sx">66 : 25</span></div><svg class="abs" style="left:896px;top:0px" width="26" height="22" viewBox="904 656 26 22">
<rect x="905.500" y="657.500" width="18" height="19" fill="#e5e8f8" stroke="#c6cade"/>
<rect x="911.500" y="663.500" width="9" height="8" fill="#e8f0fc" stroke="#5a82b8"/><circle cx="912" cy="668" r="3.800" fill="#f4d070" stroke="#b08a28"/><path d="M909 662l3-2 1 3" fill="none" stroke="#b08a28"/>
<g fill="#9aa0b8"><circle cx="927.500" cy="660" r=".8"/><circle cx="927.500" cy="663" r=".8"/><circle cx="927.500" cy="666" r=".8"/><circle cx="927.500" cy="669" r=".8"/><circle cx="927.500" cy="672" r=".8"/><circle cx="927.500" cy="675" r=".8"/></g>
</svg><svg class="abs" style="left:1152px;top:0px" width="120" height="22" viewBox="1160 656 120 22">
<g fill="#9aa0b8"><circle cx="1163.500" cy="660" r=".8"/><circle cx="1163.500" cy="663" r=".8"/><circle cx="1163.500" cy="666" r=".8"/><circle cx="1163.500" cy="669" r=".8"/><circle cx="1163.500" cy="672" r=".8"/><circle cx="1163.500" cy="675" r=".8"/></g>
<path d="M1166.500 677v-19.500h114" fill="none" stroke="#8e98b4" stroke-width="1"/><rect x="1167" y="658" width="113" height="19" fill="#e3e6f7"/>
<path d="M1173 666q0-3.500 5-3.500 6 0 6 6.500v3h-7v-4.500h-4" fill="#eec870" stroke="#6a5a40" stroke-width=".9"/><path d="M1170.500 667.500l3.500-2.500v4z" fill="#fff" stroke="#888" stroke-width=".7"/>
<path d="M1190.500 660v16" stroke="#6a7088"/>
<path d="M1200.500 663.500q2.500-1 5 .8 2.500-1.800 5-.8v8.500q-2.500-1-5 .8-2.500-1.800-5-.8z" fill="#f6e8d4" stroke="#e4b880" stroke-width=".9"/><path d="M1205.500 664.300v8.500" stroke="#e4b880" stroke-width=".8"/>
<path d="M1221 666l7-2.800 7 2.800-7 2.800z" fill="#f2a440"/><path d="M1224 668v3.200q4 1.600 8 0v-3.200" fill="#f2a440"/><path d="M1222 666.500v5" stroke="#e09030" stroke-width=".8"/>
<path d="M1244 673l8-9.500" stroke="#f0a848" stroke-width="2.400"/>
<circle cx="1270" cy="668" r="5.300" fill="#f8e2c0" stroke="#f0b868" stroke-width="1.200"/><circle cx="1270" cy="668" r="2.300" fill="none" stroke="#f0b868"/>
</svg></div>
</div>

<div class="abs" style="left:1130px;top:60px;width:56px;height:3px;background:#555"></div><div class="abs" style="left:1232px;top:59px;width:24px;height:3px;background:#9ab8e0"></div><div class="abs" style="left:1118px;top:56px;width:1px;height:7px;background:#999"></div>
<div id="fb" class="abs" style="left:434px;top:45px;width:411px;height:105px;background:#3c3c3c;border:1px solid #222">
  <div class="abs" style="left:0;top:0;width:409px;height:27px;background:#2c2c2c"></div>
  <svg class="abs" style="left:6px;top:6px" width="17" height="17" viewBox="0 0 26 26"><rect x="1" y="1" width="22" height="19" rx="3" fill="#7a1a6a" stroke="#d8c8e0" stroke-width="1.600"/><rect x="5" y="8" width="9" height="7" rx="1" fill="#fff"/><path d="M14 10.500l5-2.500v7l-5-2.500z" fill="#fff"/><circle cx="8" cy="6" r="2" fill="#fff"/><circle cx="12.500" cy="6" r="2" fill="#fff"/><circle cx="21" cy="21" r="4.500" fill="#e83838"/></svg>
  <div class="abs" style="left:0;top:6px;width:369px;text-align:center;font-size:13px;color:#f0f0f0;white-space:nowrap"><span style="display:inline-block;transform:scaleX(.93)">FlashBack Express 5 Recorder</span></div>
  <div class="abs" style="left:355px;top:17px;width:11px;height:2px;background:#e8e8e8"></div>
  <div class="abs" style="left:373px;top:5px;width:32px;height:17px;background:#9a2024"></div>
  <svg class="abs" style="left:383px;top:8px" width="12" height="11" viewBox="0 0 12 11"><path d="M2 1.500l8 8M10 1.500l-8 8" stroke="#fff" stroke-width="2"/></svg>
  <div class="abs" style="left:0;top:27px;width:409px;height:20px;background:#383838;border-bottom:1px solid #444"></div>
  <div class="abs fbm" style="left:11px">File</div><div class="abs fbm" style="left:35px">Tools</div><div class="abs fbm" style="left:65px">Scheduling</div><div class="abs fbm" style="left:119px">Window</div><div class="abs fbm" style="left:162px">Help</div>
  <div class="abs" style="left:163px;top:57px;width:11px;height:34px;border-radius:1.500px;background:linear-gradient(#3a98f8,#1a6ad8)"></div>
  <div class="abs" style="left:181px;top:57px;width:11px;height:34px;border-radius:1.500px;background:linear-gradient(#3a98f8,#1a6ad8)"></div>
  <div class="abs" style="left:215px;top:57px;width:36px;height:35px;border-radius:2px;background:linear-gradient(#f83030,#e41c1c);box-shadow:0 1px 1px #2a2a2a"></div>
  <div class="abs" style="left:286px;top:58px;font-size:11px;font-weight:bold;color:#e4e4e4;white-space:nowrap;transform:scaleX(.9);transform-origin:0 50%">Recording:</div>
  <div class="abs" style="left:286px;top:73px;font-size:11px;color:#e4e4e4;white-space:nowrap;transform:scaleX(.9);transform-origin:0 50%">0:00:35</div>
</div>

<div id="wc" class="abs" style="left:1022px;top:62px;width:257px;height:188px;background:#404040;border-left:1px solid #1a1a1a;border-top:1px solid #1a1a1a;border-bottom:1px solid #1a1a1a;overflow:hidden">
  <div class="abs" style="left:0;top:0;width:258px;height:22px;background:#3a3a3a"></div>
  <div class="abs" style="left:2px;top:4px;font-size:13.500px;color:#c6c6c6;white-space:nowrap;transform:scaleX(.93);transform-origin:0 50%">Webcam</div>
  <svg class="abs" style="left:57px;top:21px" width="201" height="166" viewBox="40 15 824 680" preserveAspectRatio="none">
    <defs><filter id="bl" x="-10%" y="-10%" width="120%" height="120%"><feGaussianBlur stdDeviation="8"/></filter>
    <linearGradient id="wall" x1="0" y1="0" x2="1" y2="1"><stop offset="0" stop-color="#8ea3bc"/><stop offset=".5" stop-color="#9fb1c8"/><stop offset="1" stop-color="#a8b6ca"/></linearGradient>
    <radialGradient id="skin" cx=".62" cy=".42" r=".62"><stop offset="0" stop-color="#be9a78"/><stop offset=".55" stop-color="#9a7454"/><stop offset="1" stop-color="#624630"/></radialGradient></defs>
    <rect x="40" y="15" width="824" height="680" fill="url(#wall)"/>
    <g filter="url(#bl)">
      <rect x="182" y="0" width="345" height="525" fill="#56665c"/>
      <rect x="212" y="0" width="300" height="480" fill="#1c2a20"/>
      <rect x="212" y="0" width="300" height="170" fill="#243f34"/>
      <rect x="190" y="176" width="320" height="16" fill="#6a6a58"/>
      <rect x="432" y="20" width="14" height="470" fill="#4a3a2a"/>
      <rect x="215" y="200" width="50" height="270" fill="#3a4434"/>
      <rect x="215" y="455" width="290" height="45" fill="#5a6650"/>
      <rect x="424" y="208" width="10" height="28" fill="#c8d8d8"/><rect x="468" y="208" width="18" height="24" fill="#a8c0c0"/><rect x="312" y="285" width="16" height="22" fill="#8aa098"/><rect x="278" y="350" width="10" height="24" fill="#d8e8e8"/><rect x="314" y="352" width="10" height="24" fill="#b8c8c8"/><rect x="426" y="350" width="8" height="16" fill="#a8b8b8"/><rect x="500" y="375" width="18" height="26" fill="#a8d0d0"/>
      <path d="M120 700L235 585 305 640 290 700z" fill="#8c2624"/>
      <path d="M490 530Q465 300 545 120Q620 0 864 0L864 560Q700 560 490 530z" fill="#17120f"/>
      <path d="M810 560L864 540 864 700 820 700z" fill="#17120f"/>
      <path d="M520 540L840 540 830 700 540 700z" fill="#7a563c"/>
      <ellipse cx="730" cy="345" rx="172" ry="262" fill="url(#skin)"/>
      <path d="M590 200Q650 60 864 80L864 20 640 20 540 160z" fill="#17120f"/>
      <ellipse cx="540" cy="360" rx="22" ry="48" fill="#a07858"/>
      <ellipse cx="665" cy="300" rx="48" ry="20" fill="#4a3428"/><ellipse cx="838" cy="305" rx="36" ry="18" fill="#4a3428"/>
      <ellipse cx="665" cy="300" rx="18" ry="12" fill="#1a1210"/><ellipse cx="845" cy="305" rx="16" ry="11" fill="#1a1210"/>
      <path d="M610 245Q660 225 715 245" stroke="#3a2a20" stroke-width="12" fill="none"/><path d="M800 245Q840 232 864 240" stroke="#3a2a20" stroke-width="12" fill="none"/>
      <ellipse cx="755" cy="400" rx="50" ry="28" fill="#b48c6c"/>
      <ellipse cx="755" cy="502" rx="70" ry="28" fill="#b08088"/><ellipse cx="750" cy="488" rx="55" ry="8" fill="#6a4048"/>
      <path d="M285 700L325 620 520 528 552 700z" fill="#3a1c8e"/>
    </g>
  </svg>
</div>
<div id="taskbar"><svg class="abs" style="left:7px;top:11px" width="16" height="16" viewBox="0 0 16 16"><path d="M0 2.200l6.500-.9v6.200H0zM7.500 1.200L16 0v7.500H7.500zM0 8.500h6.500v6.200L0 13.800zM7.500 8.500H16V16l-8.500-1.200z" fill="#fff"/></svg><div class="abs" style="left:38px;top:1px;width:322px;height:37px;background:#3a3a3a"></div><svg class="abs" style="left:46px;top:9px" width="20" height="20" viewBox="0 0 20 20"><circle cx="10" cy="10" r="8" fill="none" stroke="#f4f4f4" stroke-width="2.400"/></svg><div class="abs" style="left:72px;top:11px;font-size:14.500px;font-weight:bold;color:#b4b4b4;white-space:nowrap;transform:scaleX(.925);transform-origin:0 50%">Ask me anything</div><svg class="abs" style="left:334px;top:10px" width="12" height="18" viewBox="0 0 12 18"><rect x="3.500" y="1.500" width="5" height="9" rx="2.500" fill="none" stroke="#c8c8c8" stroke-width="1.200"/><path d="M1.500 8.500q0 4.500 4.500 4.500t4.500-4.500M6 13v3.500M3.500 16.500h5" fill="none" stroke="#c8c8c8" stroke-width="1.200"/></svg><svg class="abs" style="left:371px;top:12px" width="22" height="14" viewBox="0 0 22 14"><rect x="5" y="1" width="12" height="12" fill="none" stroke="#fff" stroke-width="1.600"/><path d="M2.500 3.500h-1.500v7h1.500M19.500 3.500h1.500v7h-1.500" fill="none" stroke="#fff" stroke-width="1.400"/></svg><svg class="abs" style="left:419px;top:8px" width="22" height="22" viewBox="0 0 22 22"><circle cx="11" cy="11" r="10.500" fill="#e84030"/><path d="M11 11L1.900 5.750A10.500 10.500 0 0 0 7 20.700z" fill="#38a050"/><path d="M11 11L7 20.700A10.500 10.500 0 0 0 20.100 5.750z" fill="#f8c828"/><path d="M11 11L1.900 5.750A10.500 10.500 0 0 1 20.100 5.750z" fill="#e84030"/><circle cx="11" cy="11" r="4.800" fill="#fff"/><circle cx="11" cy="11" r="3.800" fill="#4a88e8"/></svg><svg class="abs" style="left:464px;top:8px" width="23" height="23" viewBox="0 0 23 23"><rect width="23" height="23" fill="#0a78d8"/><rect x="7" y="7" width="9" height="9" rx="2.500" fill="none" stroke="#fff" stroke-width="1.300"/><circle cx="11.500" cy="11.500" r="2" fill="none" stroke="#fff" stroke-width="1.200"/></svg><svg class="abs" style="left:510px;top:8px" width="26" height="25" viewBox="0 0 26 25"><circle cx="7" cy="6.500" r="5.500" fill="#18a8e8"/><circle cx="15" cy="15" r="6" fill="#18a8e8"/><circle cx="11" cy="11" r="8.500" fill="#18a8e8"/><text x="6.800" y="16" font-size="14" font-weight="bold" font-family="Liberation Sans" fill="#fff">S</text><circle cx="20" cy="18.500" r="5.500" fill="#20a0e0" stroke="#fff" stroke-width="1"/><path d="M17 18.500a3 3 0 0 1 5.500-1.500M23 18.500a3 3 0 0 1-5.500 1.500" stroke="#fff" fill="none" stroke-width="1"/></svg><svg class="abs" style="left:555px;top:8px" width="24" height="24" viewBox="0 0 24 24"><circle cx="12" cy="12" r="11" fill="#2c2255"/><path d="M1.500 9.500h21M1.500 12h21M1.500 14.500h21" stroke="#eceaf6" stroke-width="1.400"/><path d="M5 3.500A11 11 0 0 0 5 20.500" stroke="#f0a030" stroke-width="1.800" fill="none"/></svg><svg class="abs" style="left:602px;top:9px" width="23" height="21" viewBox="0 0 23 21"><path d="M1 2h8l2 2h11v16H1z" fill="#f4c848"/><path d="M1 6h21v14H1z" fill="#fbe08a"/><rect x="5" y="10" width="13" height="10" fill="#48a8e8"/><rect x="8" y="14" width="7" height="6" fill="#fbe08a"/></svg><svg class="abs" style="left:648px;top:8px" width="23" height="23" viewBox="0 0 23 23"><rect x="9" y="3" width="13" height="17" fill="#fff" stroke="#2a5698"/><path d="M12 7h8M12 10h8M12 13h8M12 16h8" stroke="#2a5698" stroke-width="1.200"/><path d="M0 2.500L13 0v23L0 20.500z" fill="#2a5698"/><text x="2" y="16" font-size="10" font-weight="bold" font-family="Liberation Sans" fill="#fff">W</text></svg><div class="abs" style="left:682px;top:0px;width:46px;height:39px;background:#3c3c3c"></div><svg class="abs" style="left:693px;top:7px" width="26" height="26" viewBox="0 0 26 26"><rect x="1" y="1" width="22" height="19" rx="3" fill="#7a1a6a" stroke="#c8b0d0" stroke-width="1.400"/><rect x="5" y="8" width="9" height="7" rx="1" fill="#fff"/><path d="M14 10.500l5-2.500v7l-5-2.500z" fill="#fff"/><circle cx="8" cy="6" r="2" fill="#fff"/><circle cx="12.500" cy="6" r="2" fill="#fff"/><circle cx="21" cy="20" r="4.200" fill="#e83838"/></svg><div class="abs" style="left:502px;top:36px;width:39px;height:2px;background:#8ab4e8"></div><div class="abs" style="left:548px;top:36px;width:39px;height:2px;background:#8ab4e8"></div><div class="abs" style="left:594px;top:36px;width:39px;height:2px;background:#8ab4e8"></div><div class="abs" style="left:640px;top:36px;width:39px;height:2px;background:#8ab4e8"></div><div class="abs" style="left:682px;top:36px;width:46px;height:2px;background:#9cc0f0"></div><svg class="abs" style="left:1002px;top:5px" width="32" height="30" viewBox="0 0 32 30"><circle cx="11" cy="19" r="9" fill="#1a78d0" stroke="#c8dcf0" stroke-width="1"/><path d="M11 12a2 2 0 1 1 0 .1M6 16h10M9 16l-1 9M13 16l1 9" stroke="#fff" stroke-width="1.500" fill="none"/><circle cx="20" cy="9" r="8" fill="#1a88e0" stroke="#fff" stroke-width="1"/><text x="18" y="14" font-size="13" font-weight="bold" font-family="Liberation Serif" fill="#fff">i</text></svg><svg class="abs" style="left:1036px;top:14px" width="14" height="9" viewBox="0 0 14 9"><path d="M1.500 7.500l5.500-5.500 5.500 5.500" fill="none" stroke="#fff" stroke-width="1.500"/></svg><svg class="abs" style="left:1055px;top:12px" width="20" height="14" viewBox="0 0 20 14"><rect x="4.500" y="4.500" width="13" height="7" fill="none" stroke="#fff" stroke-width="1.200"/><path d="M18.500 6.500v3" stroke="#fff" stroke-width="1.500"/><path d="M1 3.500h6M3 1.500v4l2 1" stroke="#fff" stroke-width="1.100" fill="none"/></svg><svg class="abs" style="left:1079px;top:10px" width="20" height="18" viewBox="0 0 20 18"><path d="M5.500 16A12.500 12.500 0 0 1 18 3.500" fill="none" stroke="#5a5a5a" stroke-width="1.300"/><path d="M9 16A9 9 0 0 1 18 7" fill="none" stroke="#6a6a6a" stroke-width="1.300"/><path d="M12.500 16A5.500 5.500 0 0 1 18 10.500" fill="none" stroke="#7a7a7a" stroke-width="1.300"/><circle cx="17" cy="15.500" r="1.300" fill="#8a8a8a"/><text x="0" y="9" font-size="11" font-weight="bold" font-family="Liberation Sans" fill="#fff">*</text></svg><svg class="abs" style="left:1101px;top:11px" width="22" height="16" viewBox="0 0 22 16"><path d="M1.500 5.500h3l4-3.500v12l-4-3.500h-3z" fill="none" stroke="#fff" stroke-width="1.200"/><path d="M11 5.500q1.500 2.500 0 5M13.500 3.500q3 4.500 0 9M16 2q4 6 0 12" fill="none" stroke="#fff" stroke-width="1.100"/></svg><div class="abs" style="left:1128px;top:12px;font-size:12px;font-weight:bold;color:#eee;white-space:nowrap;transform:scaleX(.84);transform-origin:0 50%">ENG</div><div class="abs" style="left:1157px;top:2.500px;width:62px;text-align:center;font-size:12px;line-height:17px;font-weight:bold;color:#e8e8e8;white-space:nowrap"><div style="transform:scaleX(.84)">00:29</div><div style="transform:scaleX(.84)">20-04-2017</div></div><svg class="abs" style="left:1230px;top:7px" width="26" height="26" viewBox="0 0 26 26"><path d="M2.500 2.500h15v11h-8l-4 4v-4h-3z" fill="#f4f4f4" stroke="#f4f4f4" stroke-width="1"/><path d="M5 5.500h10M5 8h10M5 10.500h10" stroke="#555" stroke-width=".9"/><circle cx="17.500" cy="16.500" r="6" fill="#2a2a2a" stroke="#666" stroke-width="1"/><text x="14.700" y="20.300" font-size="10" font-weight="bold" font-family="Liberation Sans" fill="#eee">9</text></svg><div class="abs" style="left:1267px;top:0;width:1px;height:39px;background:#555"></div></div>
</div>
<div class="abs" style="left:1279px;top:0;width:1px;height:720px;background:#f4f4f4"></div>
<div class="abs" style="left:0;top:0;width:1px;height:718px;background:#f0f0f0"></div>
</body>
</html>
